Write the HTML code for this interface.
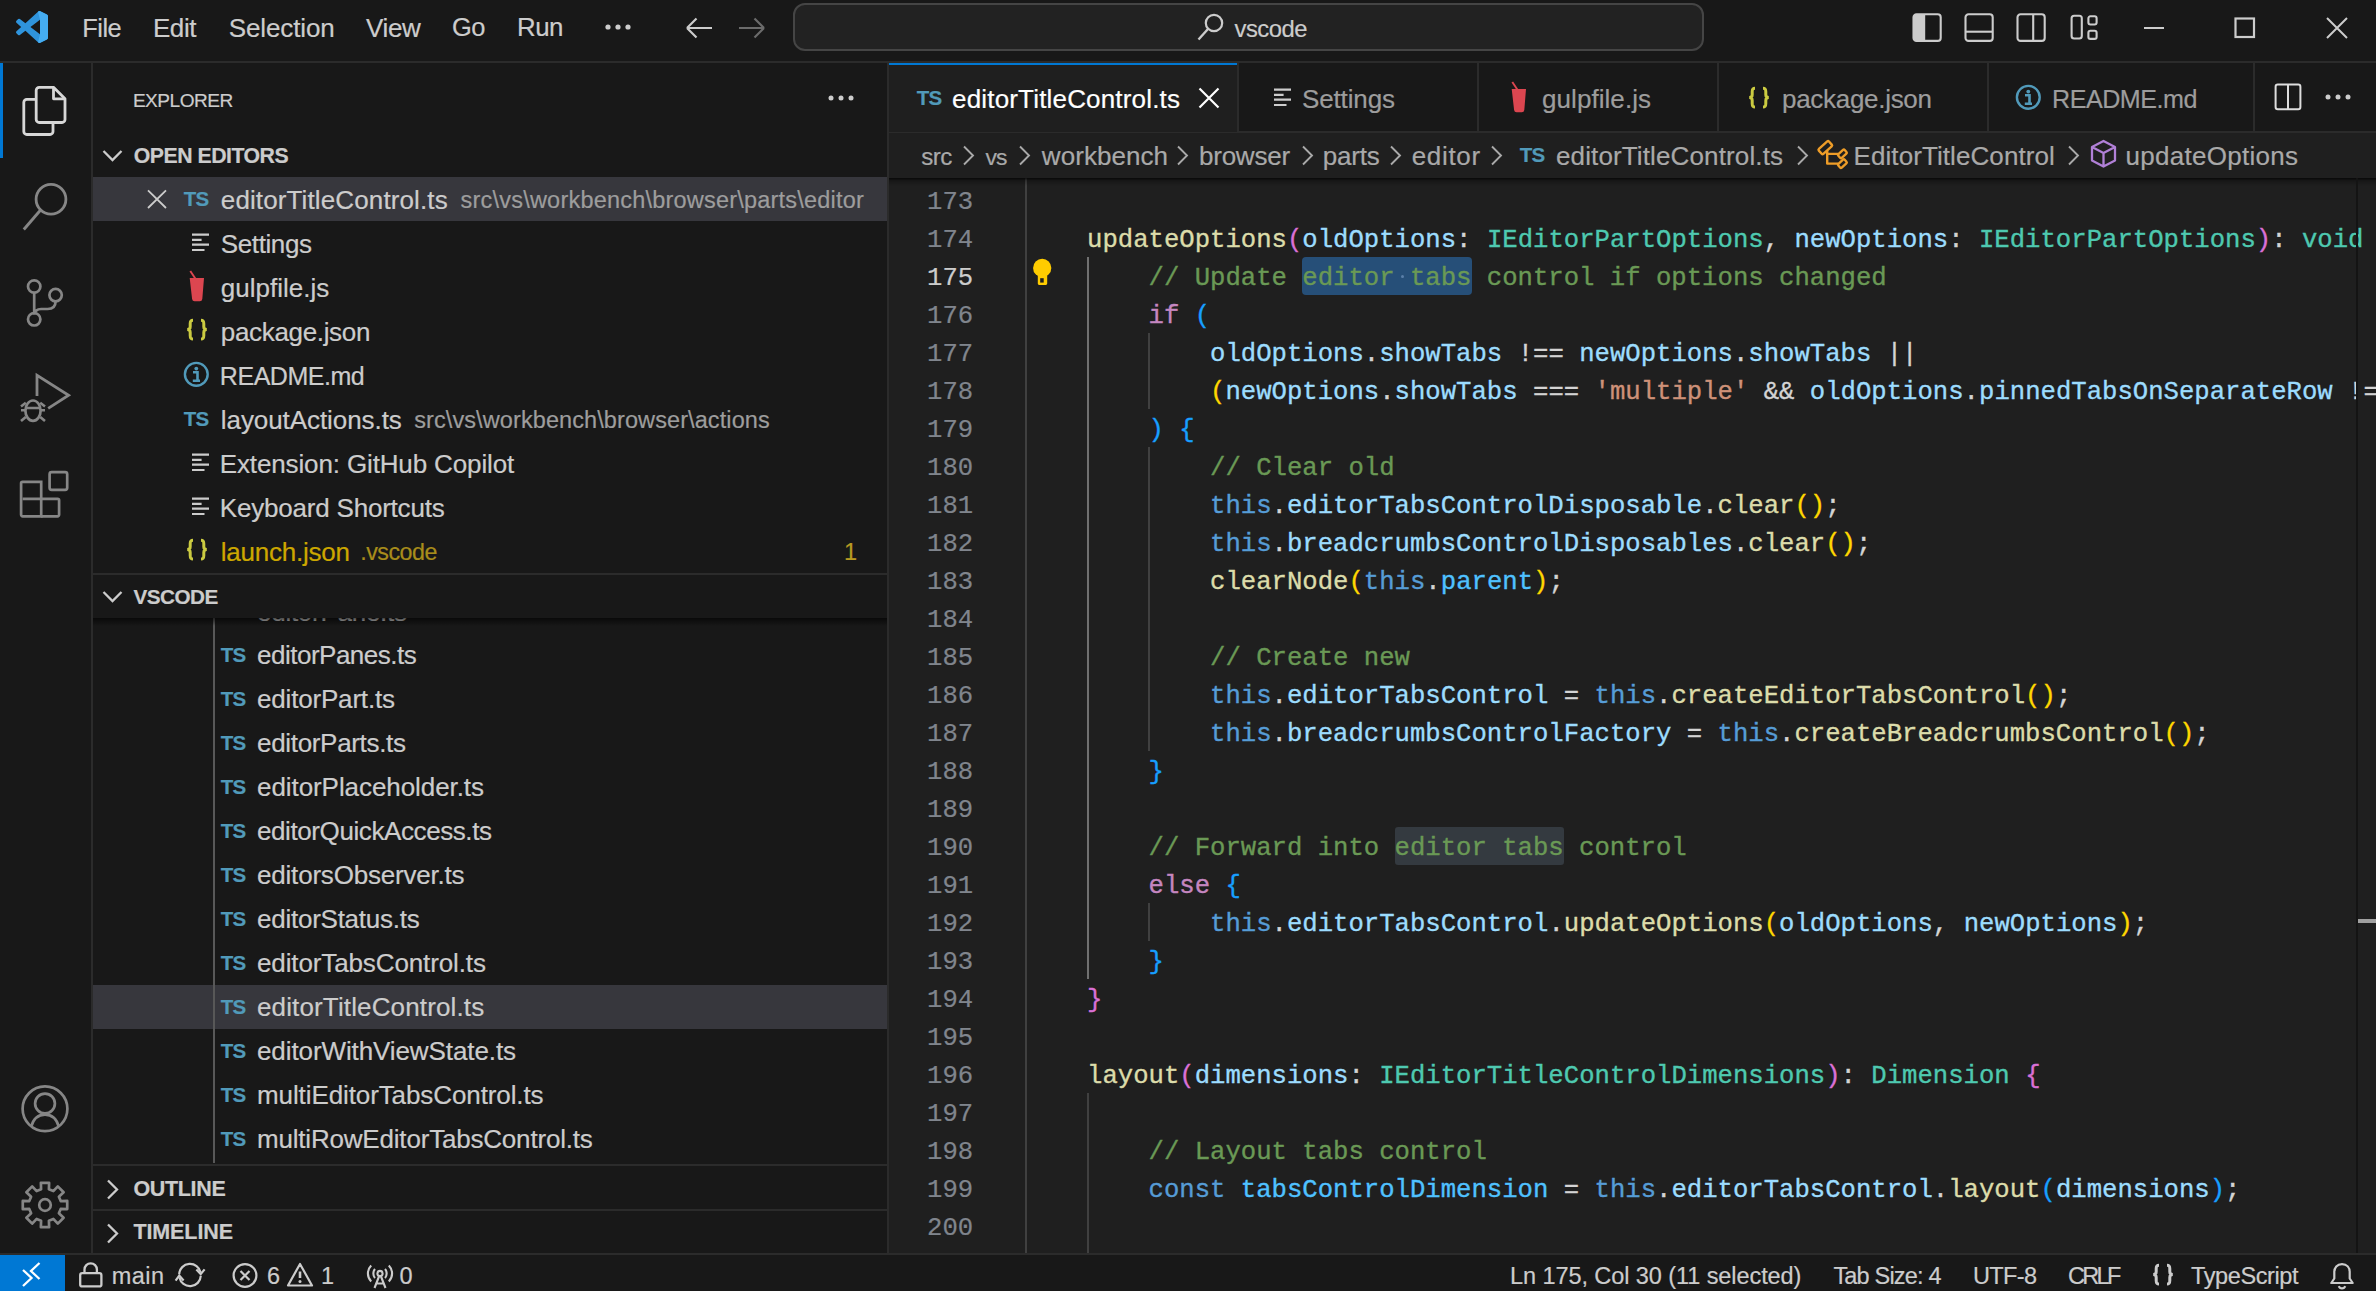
<!DOCTYPE html>
<html><head><meta charset="utf-8"><style>
html,body{margin:0;padding:0;width:2376px;height:1291px;overflow:hidden;background:#181818;}
.t{position:absolute;white-space:pre;-webkit-text-stroke:0.2px currentColor;}
.r{position:absolute;}
.s{position:absolute;overflow:visible;}
</style></head><body>
<div class="r" style="left:0px;top:0px;width:2376px;height:62px;background:#181818;"></div><div class="r" style="left:0px;top:61px;width:2376px;height:2px;background:#2b2b2b;"></div><div class="r" style="left:0px;top:63px;width:91px;height:1191px;background:#181818;"></div><div class="r" style="left:91px;top:63px;width:2px;height:1191px;background:#2b2b2b;"></div><div class="r" style="left:93px;top:63px;width:795px;height:1191px;background:#181818;"></div><div class="r" style="left:887px;top:63px;width:2px;height:1191px;background:#2b2b2b;"></div><div class="r" style="left:889px;top:63px;width:1487px;height:1191px;background:#1f1f1f;"></div><div class="r" style="left:0px;top:1253px;width:2376px;height:2px;background:#2b2b2b;"></div><div class="r" style="left:0px;top:1255px;width:2376px;height:36px;background:#181818;"></div><svg class="s" style="left:16px;top:11px;" width="32" height="32" viewBox="0 0 100 100"><path fill="#2f94dc" d="M96.46 10.8L75.86.87a6.23 6.23 0 0 0-7.1 1.21L29.35 38.04 12.19 25.01a4.16 4.16 0 0 0-5.32.24L1.36 30.26a4.17 4.17 0 0 0 0 6.16L16.24 50 1.36 63.58a4.170 4.17 0 0 0 0 6.16l5.51 5.01a4.16 4.16 0 0 0 5.32.24l17.16-13.03L68.760 97.92a6.22 6.22 0 0 0 7.1 1.21l20.6-9.92a6.25 6.25 0 0 0 3.54-5.630V16.43a6.25 6.25 0 0 0-3.54-5.63zM75.02 72.7L45.11 50l29.91-22.7v45.4z"/><path fill="#45adf2" d="M68.76 2.08a6.23 6.23 0 0 1 7.1-1.21l20.6 9.93A6.25 6.25 0 0 1 100 16.43v67.14a6.25 6.25 0 0 1-3.54 5.63l-20.6 9.92a6.22 6.22 0 0 1-7.1-1.21l6.26-25.21V27.3z"/></svg><div class="t" style="left:82.25px;top:15.51px;font-size:25.38px;line-height:25.38px;color:#cccccc;font-weight:400;letter-spacing:-0.500px;font-family:'Liberation Sans', sans-serif;">File</div><div class="t" style="left:152.90px;top:14.99px;font-size:26px;line-height:26px;color:#cccccc;font-weight:400;letter-spacing:-0.393px;font-family:'Liberation Sans', sans-serif;">Edit</div><div class="t" style="left:228.80px;top:14.99px;font-size:26px;line-height:26px;color:#cccccc;font-weight:400;letter-spacing:-0.125px;font-family:'Liberation Sans', sans-serif;">Selection</div><div class="t" style="left:366.00px;top:14.99px;font-size:26px;line-height:26px;color:#cccccc;font-weight:400;letter-spacing:-0.369px;font-family:'Liberation Sans', sans-serif;">View</div><div class="t" style="left:452.02px;top:15.47px;font-size:25.43px;line-height:25.43px;color:#cccccc;font-weight:400;letter-spacing:-0.500px;font-family:'Liberation Sans', sans-serif;">Go</div><div class="t" style="left:517.01px;top:15.11px;font-size:25.86px;line-height:25.86px;color:#cccccc;font-weight:400;letter-spacing:-0.500px;font-family:'Liberation Sans', sans-serif;">Run</div><svg class="s" style="left:603px;top:20px;" width="30" height="14" viewBox="0 0 30 14"><circle cx="5" cy="7" r="2.6" fill="#cccccc"/><circle cx="15" cy="7" r="2.6" fill="#cccccc"/><circle cx="25" cy="7" r="2.6" fill="#cccccc"/></svg><svg class="s" style="left:684px;top:16px;" width="30" height="24" viewBox="0 0 30 24"><path d="M3 12H28M3 12L12.5 2.5M3 12L12.5 21.5" stroke="#cccccc" stroke-width="2.2" fill="none"/></svg><svg class="s" style="left:737px;top:16px;" width="30" height="24" viewBox="0 0 30 24"><path d="M27 12H2M27 12L17.5 2.5M27 12L17.5 21.5" stroke="#6b6b6b" stroke-width="2.2" fill="none"/></svg><div class="r" style="left:793px;top:3px;width:907px;height:44px;border:2px solid #454545;border-radius:12px;background:#222222;"></div><svg class="s" style="left:1196px;top:12px;" width="30" height="30" viewBox="0 0 30 30"><circle cx="18" cy="11" r="8.2" stroke="#cccccc" stroke-width="2.2" fill="none"/><path d="M12.2 16.8L2.5 27.5" stroke="#cccccc" stroke-width="2.4"/></svg><div class="t" style="left:1234.50px;top:17.35px;font-size:23.8px;line-height:23.8px;color:#cccccc;font-weight:400;letter-spacing:-0.500px;font-family:'Liberation Sans', sans-serif;">vscode</div><svg class="s" style="left:1911px;top:12px;" width="32" height="30" viewBox="0 0 32 30"><rect x="2.5" y="2.3" width="27.2" height="26.6" rx="3" stroke="#cccccc" stroke-width="2.1" fill="none"/><path d="M2.5 5.3a3 3 0 0 1 3-3H14.2V28.9H5.5a3 3 0 0 1-3-3z" fill="#cccccc"/></svg><svg class="s" style="left:1963px;top:12px;" width="32" height="30" viewBox="0 0 32 30"><rect x="2.5" y="2.3" width="27.2" height="26.6" rx="3" stroke="#cccccc" stroke-width="2.1" fill="none"/><path d="M2.5 19.7H29.7" stroke="#cccccc" stroke-width="2.1"/></svg><svg class="s" style="left:2015px;top:12px;" width="32" height="30" viewBox="0 0 32 30"><rect x="2.5" y="2.3" width="27.2" height="26.6" rx="3" stroke="#cccccc" stroke-width="2.1" fill="none"/><path d="M18.2 2.3V28.9" stroke="#cccccc" stroke-width="2.1"/></svg><svg class="s" style="left:2069px;top:13px;" width="30" height="28" viewBox="0 0 30 28"><rect x="2.6" y="2.7" width="10.2" height="22.8" rx="2.5" stroke="#cccccc" stroke-width="2.1" fill="none"/><rect x="19.4" y="3.3" width="8.2" height="8.2" rx="2" stroke="#cccccc" stroke-width="2.1" fill="none"/><rect x="19.4" y="17.7" width="8.2" height="8.2" rx="2" stroke="#cccccc" stroke-width="2.1" fill="none"/></svg><svg class="s" style="left:2144px;top:26px;" width="21" height="4" viewBox="0 0 21 4"><path d="M0 2H20" stroke="#cccccc" stroke-width="2"/></svg><svg class="s" style="left:2234px;top:17px;" width="22" height="22" viewBox="0 0 22 22"><rect x="1.5" y="1.5" width="18.5" height="18.5" stroke="#cccccc" stroke-width="2.2" fill="none"/></svg><svg class="s" style="left:2326px;top:17px;" width="22" height="22" viewBox="0 0 22 22"><path d="M1 1L21 21M21 1L1 21" stroke="#cccccc" stroke-width="2"/></svg><div class="r" style="left:0px;top:63px;width:3px;height:95px;background:#0078d4;"></div><svg class="s" style="left:20px;top:84px;" width="50" height="54" viewBox="0 0 50 54"><path d="M17 15.3H6.8a3 3 0 0 0-3 3V47.5a3 3 0 0 0 3 3H30a3 3 0 0 0 3-3V39" stroke="#d7d7d7" stroke-width="2.8" fill="none" stroke-linejoin="round"/><path d="M19.2 3.3H33.5L45 14.8V35.5a3 3 0 0 1-3 3H19.2a3 3 0 0 1-3-3V6.3a3 3 0 0 1 3-3z" stroke="#d7d7d7" stroke-width="2.8" fill="none" stroke-linejoin="round"/><path d="M33.5 3.3V14.8H45" stroke="#d7d7d7" stroke-width="2.8" fill="none" stroke-linejoin="round"/></svg><svg class="s" style="left:20px;top:180px;" width="52" height="54" viewBox="0 0 52 54"><circle cx="31" cy="19.2" r="14.9" stroke="#868686" stroke-width="2.8" fill="none"/><path d="M20.8 29.8L3.8 49.5" stroke="#868686" stroke-width="2.9" stroke-linecap="butt"/></svg><svg class="s" style="left:20px;top:274px;" width="52" height="54" viewBox="0 0 52 54"><circle cx="14.2" cy="12.5" r="6.2" stroke="#868686" stroke-width="2.7" fill="none"/><circle cx="14.2" cy="45.3" r="6.2" stroke="#868686" stroke-width="2.7" fill="none"/><circle cx="35.6" cy="21.1" r="6.2" stroke="#868686" stroke-width="2.7" fill="none"/><path d="M14.2 18.7V39.1M35.6 27.3c0 5-3 7.7-8 7.7h-6.5c-4 0-6.9 2.5-6.9 5.5" stroke="#868686" stroke-width="2.7" fill="none"/></svg><svg class="s" style="left:18px;top:370px;" width="54" height="56" viewBox="0 0 54 56"><path d="M19 26V5.2L50.6 25.3L30.2 38.4" stroke="#868686" stroke-width="2.8" fill="none" stroke-linejoin="miter"/><ellipse cx="15" cy="40.7" rx="7.6" ry="10.2" stroke="#868686" stroke-width="2.7" fill="none"/><path d="M7.4 38H22.6M3 36.5L7.8 32.8M27 36.5L22.2 32.8M3 40.2H7.4M22.6 40.2H27M3 51L7.8 47M27 51L22.2 47" stroke="#868686" stroke-width="2.6" fill="none"/></svg><svg class="s" style="left:18px;top:468px;" width="54" height="54" viewBox="0 0 54 54"><path d="M4.6 13.8H23.2V48.3H4.6a1.5 1.5 0 0 1-1.5-1.5V15.3a1.5 1.5 0 0 1 1.5-1.5z" stroke="#868686" stroke-width="2.7" fill="none"/><path d="M4.6 30.8H39.6a1.5 1.5 0 0 1 1.5 1.5V46.8a1.5 1.5 0 0 1-1.5 1.5H23.2" stroke="#868686" stroke-width="2.7" fill="none"/><rect x="31.6" y="4.2" width="17.6" height="17.6" rx="2" stroke="#868686" stroke-width="2.7" fill="none"/></svg><svg class="s" style="left:18px;top:1082px;" width="54" height="54" viewBox="0 0 54 54"><circle cx="27" cy="26.8" r="22.4" stroke="#868686" stroke-width="2.7" fill="none"/><circle cx="27" cy="21.5" r="9.9" stroke="#868686" stroke-width="2.7" fill="none"/><path d="M13.3 44.5C15.5 36.5 20.5 32.6 27 32.6S38.5 36.5 40.7 44.5" stroke="#868686" stroke-width="2.7" fill="none"/></svg><svg class="s" style="left:18px;top:1178px;" width="54" height="54" viewBox="0 0 54 54"><path d="M23.08 11.28 L22.88 4.78 L31.12 4.78 L30.92 11.28 L35.34 13.11 L39.80 8.37 L45.63 14.20 L40.89 18.66 L42.72 23.08 L49.22 22.88 L49.22 31.12 L42.72 30.92 L40.89 35.34 L45.63 39.80 L39.80 45.63 L35.34 40.89 L30.92 42.72 L31.12 49.22 L22.88 49.22 L23.08 42.72 L18.66 40.89 L14.20 45.63 L8.37 39.80 L13.11 35.34 L11.28 30.92 L4.78 31.12 L4.78 22.88 L11.28 23.08 L13.11 18.66 L8.37 14.20 L14.20 8.37 L18.66 13.11Z" stroke="#868686" stroke-width="2.7" fill="none" stroke-linejoin="round"/><circle cx="27" cy="27" r="5.8" stroke="#868686" stroke-width="2.7" fill="none"/></svg><div class="t" style="left:132.91px;top:91.36px;font-size:19.07px;line-height:19.07px;color:#cccccc;font-weight:400;letter-spacing:-0.500px;font-family:'Liberation Sans', sans-serif;">EXPLORER</div><svg class="s" style="left:826px;top:92px;" width="30" height="12" viewBox="0 0 30 12"><circle cx="5" cy="6" r="2.5" fill="#cccccc"/><circle cx="15" cy="6" r="2.5" fill="#cccccc"/><circle cx="25" cy="6" r="2.5" fill="#cccccc"/></svg><svg class="s" style="left:102px;top:149px;" width="22" height="14" viewBox="0 0 22 14"><path d="M1.5 2L10.5 11L19.5 2" stroke="#cccccc" stroke-width="2.3" fill="none"/></svg><div class="t" style="left:133.80px;top:145.50px;font-size:21.27px;line-height:21.27px;color:#cccccc;font-weight:700;letter-spacing:-0.500px;font-family:'Liberation Sans', sans-serif;">OPEN EDITORS</div><div class="r" style="left:93px;top:177px;width:794px;height:44px;background:#37373d;"></div><div class="t" style="left:183.70px;top:188.65px;font-size:20.5px;line-height:20.5px;color:#519aba;font-weight:700;letter-spacing:-0.600px;font-family:'Liberation Sans', sans-serif;">TS</div><div class="t" style="left:220.80px;top:186.99px;font-size:26px;line-height:26px;color:#cccccc;font-weight:400;letter-spacing:0.122px;font-family:'Liberation Sans', sans-serif;">editorTitleControl.ts</div><div class="t" style="left:460.60px;top:189.11px;font-size:23.5px;line-height:23.5px;color:#9d9d9d;font-weight:400;letter-spacing:0.208px;font-family:'Liberation Sans', sans-serif;">src\vs\workbench\browser\parts\editor</div><svg class="s" style="left:192px;top:233px;" width="18" height="18" viewBox="0 0 18 18"><path d="M0 1.6H17M0 6.9H9.6M0 11.7H17M0 17H12.5" stroke="#cccccc" stroke-width="2.2"/></svg><div class="t" style="left:220.80px;top:230.99px;font-size:26px;line-height:26px;color:#cccccc;font-weight:400;letter-spacing:-0.392px;font-family:'Liberation Sans', sans-serif;">Settings</div><svg class="s" style="left:185.6px;top:264px;" width="22" height="40" viewBox="0 0 22 40"><path d="M3.7 14H18L16.3 35a2.5 2.5 0 0 1-2.5 2.2H8.6a2.5 2.5 0 0 1-2.5-2.2Z" fill="#dc4650"/><path d="M4.3 7L9.3 14.5" stroke="#dc4650" stroke-width="1.9"/></svg><div class="t" style="left:220.80px;top:274.99px;font-size:26px;line-height:26px;color:#cccccc;font-weight:400;letter-spacing:0.001px;font-family:'Liberation Sans', sans-serif;">gulpfile.js</div><svg class="s" style="left:186px;top:319px;" width="22" height="22" viewBox="0 0 22 22"><path d="M7 1.2C4.6 1.2 4.2 2.2 4.2 4.8V7.8C4.2 9.6 3.4 10.6 1.2 10.6C3.4 10.6 4.2 11.6 4.2 13.4V16.4C4.2 19 4.6 20 7 20M15 1.2C17.4 1.2 17.8 2.2 17.8 4.8V7.8C17.8 9.6 18.6 10.6 20.8 10.6C18.6 10.6 17.8 11.6 17.8 13.4V16.4C17.8 19 17.4 20 15 20" stroke="#cbcb41" stroke-width="3.0" fill="none"/></svg><div class="t" style="left:220.80px;top:318.99px;font-size:26px;line-height:26px;color:#cccccc;font-weight:400;letter-spacing:-0.333px;font-family:'Liberation Sans', sans-serif;">package.json</div><svg class="s" style="left:183px;top:361.3px;" width="27" height="27" viewBox="0 0 27 27"><circle cx="13.3" cy="13.3" r="11.4" stroke="#519aba" stroke-width="2.4" fill="none"/><circle cx="13.3" cy="7.6" r="1.9" fill="#519aba"/><path d="M10 11.2H14.5V19.5M9.8 19.8H17" stroke="#519aba" stroke-width="2.6" fill="none"/></svg><div class="t" style="left:219.87px;top:363.79px;font-size:25.05px;line-height:25.05px;color:#cccccc;font-weight:400;letter-spacing:-0.500px;font-family:'Liberation Sans', sans-serif;">README.md</div><div class="t" style="left:183.70px;top:408.65px;font-size:20.5px;line-height:20.5px;color:#519aba;font-weight:700;letter-spacing:-0.600px;font-family:'Liberation Sans', sans-serif;">TS</div><div class="t" style="left:220.80px;top:406.99px;font-size:26px;line-height:26px;color:#cccccc;font-weight:400;letter-spacing:-0.073px;font-family:'Liberation Sans', sans-serif;">layoutActions.ts</div><div class="t" style="left:414.20px;top:409.11px;font-size:23.5px;line-height:23.5px;color:#9d9d9d;font-weight:400;letter-spacing:0.094px;font-family:'Liberation Sans', sans-serif;">src\vs\workbench\browser\actions</div><svg class="s" style="left:192px;top:453px;" width="18" height="18" viewBox="0 0 18 18"><path d="M0 1.6H17M0 6.9H9.6M0 11.7H17M0 17H12.5" stroke="#cccccc" stroke-width="2.2"/></svg><div class="t" style="left:219.80px;top:450.99px;font-size:26px;line-height:26px;color:#cccccc;font-weight:400;letter-spacing:-0.137px;font-family:'Liberation Sans', sans-serif;">Extension: GitHub Copilot</div><svg class="s" style="left:192px;top:497px;" width="18" height="18" viewBox="0 0 18 18"><path d="M0 1.6H17M0 6.9H9.6M0 11.7H17M0 17H12.5" stroke="#cccccc" stroke-width="2.2"/></svg><div class="t" style="left:219.80px;top:494.99px;font-size:26px;line-height:26px;color:#cccccc;font-weight:400;letter-spacing:-0.203px;font-family:'Liberation Sans', sans-serif;">Keyboard Shortcuts</div><svg class="s" style="left:186px;top:539px;" width="22" height="22" viewBox="0 0 22 22"><path d="M7 1.2C4.6 1.2 4.2 2.2 4.2 4.8V7.8C4.2 9.6 3.4 10.6 1.2 10.6C3.4 10.6 4.2 11.6 4.2 13.4V16.4C4.2 19 4.6 20 7 20M15 1.2C17.4 1.2 17.8 2.2 17.8 4.8V7.8C17.8 9.6 18.6 10.6 20.8 10.6C18.6 10.6 17.8 11.6 17.8 13.4V16.4C17.8 19 17.4 20 15 20" stroke="#cbcb41" stroke-width="3.0" fill="none"/></svg><div class="t" style="left:220.80px;top:538.99px;font-size:26px;line-height:26px;color:#cca700;font-weight:400;letter-spacing:-0.238px;font-family:'Liberation Sans', sans-serif;">launch.json</div><div class="t" style="left:360.22px;top:541.31px;font-size:23.26px;line-height:23.26px;color:#a88d1b;font-weight:400;letter-spacing:-0.500px;font-family:'Liberation Sans', sans-serif;">.vscode</div><svg class="s" style="left:147px;top:189px;" width="20" height="20" viewBox="0 0 20 20"><path d="M1 1.3L19 19M19 1.3L1 19" stroke="#cccccc" stroke-width="1.8"/></svg><div class="t" style="left:844.00px;top:541.11px;font-size:23.5px;line-height:23.5px;color:#b89a22;font-weight:400;letter-spacing:0.000px;font-family:'Liberation Sans', sans-serif;">1</div><div class="r" style="left:93px;top:573px;width:794px;height:2px;background:#2b2b2b;"></div><svg class="s" style="left:102px;top:590px;" width="22" height="14" viewBox="0 0 22 14"><path d="M1.5 2L10.5 11L19.5 2" stroke="#cccccc" stroke-width="2.3" fill="none"/></svg><div class="t" style="left:133.50px;top:587.10px;font-size:20.68px;line-height:20.68px;color:#cccccc;font-weight:700;letter-spacing:-0.500px;font-family:'Liberation Sans', sans-serif;">VSCODE</div><div class="r" style="left:93px;top:618px;width:794px;height:547px;overflow:hidden"><div class="r" style="left:0px;top:367px;width:794px;height:44px;background:#37373d;"></div><div class="t" style="left:127.70px;top:-17.35px;font-size:20.5px;line-height:20.5px;color:#519aba;font-weight:700;letter-spacing:-0.600px;font-family:'Liberation Sans', sans-serif;">TS</div><div class="t" style="left:164.00px;top:-19.51px;font-size:26px;line-height:26px;color:#cccccc;font-weight:400;letter-spacing:-0.267px;font-family:'Liberation Sans', sans-serif;">editorPane.ts</div><div class="t" style="left:127.70px;top:26.65px;font-size:20.5px;line-height:20.5px;color:#519aba;font-weight:700;letter-spacing:-0.600px;font-family:'Liberation Sans', sans-serif;">TS</div><div class="t" style="left:164.00px;top:24.49px;font-size:26.0px;line-height:26.0px;color:#cccccc;font-weight:400;letter-spacing:-0.500px;font-family:'Liberation Sans', sans-serif;">editorPanes.ts</div><div class="t" style="left:127.70px;top:70.65px;font-size:20.5px;line-height:20.5px;color:#519aba;font-weight:700;letter-spacing:-0.600px;font-family:'Liberation Sans', sans-serif;">TS</div><div class="t" style="left:164.00px;top:68.49px;font-size:26px;line-height:26px;color:#cccccc;font-weight:400;letter-spacing:-0.181px;font-family:'Liberation Sans', sans-serif;">editorPart.ts</div><div class="t" style="left:127.70px;top:114.65px;font-size:20.5px;line-height:20.5px;color:#519aba;font-weight:700;letter-spacing:-0.600px;font-family:'Liberation Sans', sans-serif;">TS</div><div class="t" style="left:164.00px;top:112.49px;font-size:26px;line-height:26px;color:#cccccc;font-weight:400;letter-spacing:-0.321px;font-family:'Liberation Sans', sans-serif;">editorParts.ts</div><div class="t" style="left:127.70px;top:158.65px;font-size:20.5px;line-height:20.5px;color:#519aba;font-weight:700;letter-spacing:-0.600px;font-family:'Liberation Sans', sans-serif;">TS</div><div class="t" style="left:164.00px;top:156.49px;font-size:26px;line-height:26px;color:#cccccc;font-weight:400;letter-spacing:-0.072px;font-family:'Liberation Sans', sans-serif;">editorPlaceholder.ts</div><div class="t" style="left:127.70px;top:202.65px;font-size:20.5px;line-height:20.5px;color:#519aba;font-weight:700;letter-spacing:-0.600px;font-family:'Liberation Sans', sans-serif;">TS</div><div class="t" style="left:164.00px;top:200.49px;font-size:26px;line-height:26px;color:#cccccc;font-weight:400;letter-spacing:-0.408px;font-family:'Liberation Sans', sans-serif;">editorQuickAccess.ts</div><div class="t" style="left:127.70px;top:246.65px;font-size:20.5px;line-height:20.5px;color:#519aba;font-weight:700;letter-spacing:-0.600px;font-family:'Liberation Sans', sans-serif;">TS</div><div class="t" style="left:164.00px;top:244.49px;font-size:26px;line-height:26px;color:#cccccc;font-weight:400;letter-spacing:-0.198px;font-family:'Liberation Sans', sans-serif;">editorsObserver.ts</div><div class="t" style="left:127.70px;top:290.65px;font-size:20.5px;line-height:20.5px;color:#519aba;font-weight:700;letter-spacing:-0.600px;font-family:'Liberation Sans', sans-serif;">TS</div><div class="t" style="left:164.00px;top:288.49px;font-size:26px;line-height:26px;color:#cccccc;font-weight:400;letter-spacing:-0.250px;font-family:'Liberation Sans', sans-serif;">editorStatus.ts</div><div class="t" style="left:127.70px;top:334.65px;font-size:20.5px;line-height:20.5px;color:#519aba;font-weight:700;letter-spacing:-0.600px;font-family:'Liberation Sans', sans-serif;">TS</div><div class="t" style="left:164.00px;top:332.49px;font-size:26px;line-height:26px;color:#cccccc;font-weight:400;letter-spacing:-0.122px;font-family:'Liberation Sans', sans-serif;">editorTabsControl.ts</div><div class="t" style="left:127.70px;top:378.65px;font-size:20.5px;line-height:20.5px;color:#519aba;font-weight:700;letter-spacing:-0.600px;font-family:'Liberation Sans', sans-serif;">TS</div><div class="t" style="left:164.00px;top:376.49px;font-size:26px;line-height:26px;color:#cccccc;font-weight:400;letter-spacing:0.137px;font-family:'Liberation Sans', sans-serif;">editorTitleControl.ts</div><div class="t" style="left:127.70px;top:422.65px;font-size:20.5px;line-height:20.5px;color:#519aba;font-weight:700;letter-spacing:-0.600px;font-family:'Liberation Sans', sans-serif;">TS</div><div class="t" style="left:164.00px;top:420.49px;font-size:26px;line-height:26px;color:#cccccc;font-weight:400;letter-spacing:-0.099px;font-family:'Liberation Sans', sans-serif;">editorWithViewState.ts</div><div class="t" style="left:127.70px;top:466.65px;font-size:20.5px;line-height:20.5px;color:#519aba;font-weight:700;letter-spacing:-0.600px;font-family:'Liberation Sans', sans-serif;">TS</div><div class="t" style="left:164.00px;top:464.49px;font-size:26px;line-height:26px;color:#cccccc;font-weight:400;letter-spacing:-0.100px;font-family:'Liberation Sans', sans-serif;">multiEditorTabsControl.ts</div><div class="t" style="left:127.70px;top:510.65px;font-size:20.5px;line-height:20.5px;color:#519aba;font-weight:700;letter-spacing:-0.600px;font-family:'Liberation Sans', sans-serif;">TS</div><div class="t" style="left:164.00px;top:508.49px;font-size:26px;line-height:26px;color:#cccccc;font-weight:400;letter-spacing:-0.193px;font-family:'Liberation Sans', sans-serif;">multiRowEditorTabsControl.ts</div><div class="r" style="left:120px;top:0px;width:2px;height:545px;background:#585858;"></div><div class="r" style="left:0;top:0;width:794px;height:8px;background:linear-gradient(#000000a0,#00000000)"></div></div><div class="r" style="left:93px;top:1164px;width:794px;height:2px;background:#2b2b2b;"></div><svg class="s" style="left:106px;top:1179px;" width="14" height="22" viewBox="0 0 14 22"><path d="M2 1.5L11 10.5L2 19.5" stroke="#cccccc" stroke-width="2.3" fill="none"/></svg><div class="t" style="left:133.40px;top:1178.80px;font-size:21.5px;line-height:21.5px;color:#cccccc;font-weight:700;letter-spacing:-0.336px;font-family:'Liberation Sans', sans-serif;">OUTLINE</div><div class="r" style="left:93px;top:1209px;width:794px;height:2px;background:#2b2b2b;"></div><svg class="s" style="left:106px;top:1223px;" width="14" height="22" viewBox="0 0 14 22"><path d="M2 1.5L11 10.5L2 19.5" stroke="#cccccc" stroke-width="2.3" fill="none"/></svg><div class="t" style="left:133.40px;top:1222.30px;font-size:21.5px;line-height:21.5px;color:#cccccc;font-weight:700;letter-spacing:-0.099px;font-family:'Liberation Sans', sans-serif;">TIMELINE</div><div class="r" style="left:889px;top:63px;width:1487px;height:69px;background:#181818;"></div><div class="r" style="left:889px;top:131px;width:1487px;height:2px;background:#2b2b2b;"></div><div class="r" style="left:889px;top:63px;width:348px;height:69px;background:#1f1f1f;"></div><div class="r" style="left:889px;top:63px;width:348px;height:2px;background:#0078d4;"></div><div class="r" style="left:1237px;top:63px;width:2px;height:68px;background:#2b2b2b;"></div><div class="r" style="left:1477px;top:63px;width:2px;height:68px;background:#2b2b2b;"></div><div class="r" style="left:1717px;top:63px;width:2px;height:68px;background:#2b2b2b;"></div><div class="r" style="left:1987px;top:63px;width:2px;height:68px;background:#2b2b2b;"></div><div class="r" style="left:2253px;top:63px;width:2px;height:68px;background:#2b2b2b;"></div><div class="t" style="left:916.70px;top:87.65px;font-size:20.5px;line-height:20.5px;color:#519aba;font-weight:700;letter-spacing:-0.600px;font-family:'Liberation Sans', sans-serif;">TS</div><div class="t" style="left:952.00px;top:85.99px;font-size:26px;line-height:26px;color:#ffffff;font-weight:400;letter-spacing:0.177px;font-family:'Liberation Sans', sans-serif;">editorTitleControl.ts</div><svg class="s" style="left:1198px;top:87px;" width="22" height="22" viewBox="0 0 22 22"><path d="M1.5 1.5L20.5 20.5M20.5 1.5L1.5 20.5" stroke="#ffffff" stroke-width="2.2"/></svg><svg class="s" style="left:1274px;top:88px;" width="18" height="18" viewBox="0 0 18 18"><path d="M0 1.6H17M0 6.9H9.6M0 11.7H17M0 17H12.5" stroke="#cccccc" stroke-width="2.2"/></svg><div class="t" style="left:1302.00px;top:85.99px;font-size:26px;line-height:26px;color:#9d9d9d;font-weight:400;letter-spacing:-0.135px;font-family:'Liberation Sans', sans-serif;">Settings</div><svg class="s" style="left:1508px;top:75px;" width="22" height="40" viewBox="0 0 22 40"><path d="M3.7 14H18L16.3 35a2.5 2.5 0 0 1-2.5 2.2H8.6a2.5 2.5 0 0 1-2.5-2.2Z" fill="#dc4650"/><path d="M4.3 7L9.3 14.5" stroke="#dc4650" stroke-width="1.9"/></svg><div class="t" style="left:1542.00px;top:85.99px;font-size:26px;line-height:26px;color:#9d9d9d;font-weight:400;letter-spacing:0.061px;font-family:'Liberation Sans', sans-serif;">gulpfile.js</div><svg class="s" style="left:1747.5px;top:86.5px;" width="22" height="22" viewBox="0 0 22 22"><path d="M7 1.2C4.6 1.2 4.2 2.2 4.2 4.8V7.8C4.2 9.6 3.4 10.6 1.2 10.6C3.4 10.6 4.2 11.6 4.2 13.4V16.4C4.2 19 4.6 20 7 20M15 1.2C17.4 1.2 17.8 2.2 17.8 4.8V7.8C17.8 9.6 18.6 10.6 20.8 10.6C18.6 10.6 17.8 11.6 17.8 13.4V16.4C17.8 19 17.4 20 15 20" stroke="#cbcb41" stroke-width="3.0" fill="none"/></svg><div class="t" style="left:1782.00px;top:85.99px;font-size:26px;line-height:26px;color:#9d9d9d;font-weight:400;letter-spacing:-0.296px;font-family:'Liberation Sans', sans-serif;">package.json</div><svg class="s" style="left:2015px;top:84px;" width="27" height="27" viewBox="0 0 27 27"><circle cx="13.3" cy="13.3" r="11.4" stroke="#519aba" stroke-width="2.4" fill="none"/><circle cx="13.3" cy="7.6" r="1.9" fill="#519aba"/><path d="M10 11.2H14.5V19.5M9.8 19.8H17" stroke="#519aba" stroke-width="2.6" fill="none"/></svg><div class="t" style="left:2052.07px;top:86.74px;font-size:25.12px;line-height:25.12px;color:#9d9d9d;font-weight:400;letter-spacing:-0.500px;font-family:'Liberation Sans', sans-serif;">README.md</div><svg class="s" style="left:2274px;top:83px;" width="28" height="28" viewBox="0 0 28 28"><rect x="1.6" y="1.6" width="24.8" height="24.6" rx="2.2" stroke="#dddddd" stroke-width="2" fill="none"/><path d="M14 1.6V26.2" stroke="#dddddd" stroke-width="2"/></svg><svg class="s" style="left:2324px;top:91px;" width="30" height="12" viewBox="0 0 30 12"><circle cx="4" cy="6" r="2.5" fill="#cccccc"/><circle cx="14" cy="6" r="2.5" fill="#cccccc"/><circle cx="24" cy="6" r="2.5" fill="#cccccc"/></svg><div class="t" style="left:921.20px;top:144.75px;font-size:24.16px;line-height:24.16px;color:#a9a9a9;font-weight:400;letter-spacing:-0.500px;font-family:'Liberation Sans', sans-serif;">src</div><div class="t" style="left:985.40px;top:145.83px;font-size:22.88px;line-height:22.88px;color:#a9a9a9;font-weight:400;letter-spacing:-0.780px;font-family:'Liberation Sans', sans-serif;">vs</div><div class="t" style="left:1041.80px;top:143.19px;font-size:26px;line-height:26px;color:#a9a9a9;font-weight:400;letter-spacing:0.066px;font-family:'Liberation Sans', sans-serif;">workbench</div><div class="t" style="left:1199.00px;top:143.19px;font-size:26px;line-height:26px;color:#a9a9a9;font-weight:400;letter-spacing:-0.236px;font-family:'Liberation Sans', sans-serif;">browser</div><div class="t" style="left:1322.70px;top:143.19px;font-size:26px;line-height:26px;color:#a9a9a9;font-weight:400;letter-spacing:-0.200px;font-family:'Liberation Sans', sans-serif;">parts</div><div class="t" style="left:1411.70px;top:143.19px;font-size:26px;line-height:26px;color:#a9a9a9;font-weight:400;letter-spacing:0.664px;font-family:'Liberation Sans', sans-serif;">editor</div><svg class="s" style="left:962px;top:144.5px;" width="14" height="22" viewBox="0 0 14 22"><path d="M2 1.5L11 10.5L2 19.5" stroke="#a9a9a9" stroke-width="1.9" fill="none"/></svg><svg class="s" style="left:1018px;top:144.5px;" width="14" height="22" viewBox="0 0 14 22"><path d="M2 1.5L11 10.5L2 19.5" stroke="#a9a9a9" stroke-width="1.9" fill="none"/></svg><svg class="s" style="left:1176px;top:144.5px;" width="14" height="22" viewBox="0 0 14 22"><path d="M2 1.5L11 10.5L2 19.5" stroke="#a9a9a9" stroke-width="1.9" fill="none"/></svg><svg class="s" style="left:1301px;top:144.5px;" width="14" height="22" viewBox="0 0 14 22"><path d="M2 1.5L11 10.5L2 19.5" stroke="#a9a9a9" stroke-width="1.9" fill="none"/></svg><svg class="s" style="left:1389px;top:144.5px;" width="14" height="22" viewBox="0 0 14 22"><path d="M2 1.5L11 10.5L2 19.5" stroke="#a9a9a9" stroke-width="1.9" fill="none"/></svg><svg class="s" style="left:1490px;top:144.5px;" width="14" height="22" viewBox="0 0 14 22"><path d="M2 1.5L11 10.5L2 19.5" stroke="#a9a9a9" stroke-width="1.9" fill="none"/></svg><svg class="s" style="left:1796px;top:144.5px;" width="14" height="22" viewBox="0 0 14 22"><path d="M2 1.5L11 10.5L2 19.5" stroke="#a9a9a9" stroke-width="1.9" fill="none"/></svg><svg class="s" style="left:2067px;top:144.5px;" width="14" height="22" viewBox="0 0 14 22"><path d="M2 1.5L11 10.5L2 19.5" stroke="#a9a9a9" stroke-width="1.9" fill="none"/></svg><div class="t" style="left:1519.70px;top:144.65px;font-size:20.5px;line-height:20.5px;color:#519aba;font-weight:700;letter-spacing:-0.600px;font-family:'Liberation Sans', sans-serif;">TS</div><div class="t" style="left:1556.00px;top:143.19px;font-size:26px;line-height:26px;color:#a9a9a9;font-weight:400;letter-spacing:0.127px;font-family:'Liberation Sans', sans-serif;">editorTitleControl.ts</div><svg class="s" style="left:1812px;top:136px;" width="40" height="36" viewBox="0 0 40 36"><g stroke="#ee9d28" stroke-width="2.4" fill="none" stroke-linejoin="round"><rect x="-6.8" y="-3.3" width="13.6" height="6.6" rx="1.2" transform="translate(13.3 11.6) rotate(-42)"/><rect x="-4.3" y="-2.5" width="8.6" height="5" rx="1.2" transform="translate(30.4 17.9) rotate(-42)"/><rect x="-4.3" y="-2.5" width="8.6" height="5" rx="1.2" transform="translate(30.4 27.6) rotate(-42)"/><path d="M15.2 14.5V27.6H26M15.2 17.9H26"/></g></svg><div class="t" style="left:1853.50px;top:143.19px;font-size:26px;line-height:26px;color:#a9a9a9;font-weight:400;letter-spacing:0.082px;font-family:'Liberation Sans', sans-serif;">EditorTitleControl</div><svg class="s" style="left:2090px;top:139px;" width="28" height="30" viewBox="0 0 28 30"><path d="M13.5 2L25 8V21.5L13.5 27.5L2 21.5V8Z M2 8L13.5 14L25 8 M13.5 14V27.5" stroke="#b180d7" stroke-width="2.3" fill="none" stroke-linejoin="round"/></svg><div class="t" style="left:2125.50px;top:143.19px;font-size:26px;line-height:26px;color:#a9a9a9;font-weight:400;letter-spacing:0.281px;font-family:'Liberation Sans', sans-serif;">updateOptions</div><div class="r" style="left:889px;top:178px;width:1487px;height:1075px;overflow:hidden"><div class="t" style="left:38.06px;top:-26.35px;font-size:25.633333333333336px;line-height:25.633333333333336px;color:#80858d;font-weight:400;letter-spacing:0.000px;font-family:'Liberation Mono', monospace;">172</div><div class="t" style="left:38.06px;top:11.65px;font-size:25.633333333333336px;line-height:25.633333333333336px;color:#80858d;font-weight:400;letter-spacing:0.000px;font-family:'Liberation Mono', monospace;">173</div><div class="t" style="left:38.06px;top:49.65px;font-size:25.633333333333336px;line-height:25.633333333333336px;color:#80858d;font-weight:400;letter-spacing:0.000px;font-family:'Liberation Mono', monospace;">174</div><div class="t" style="left:38.06px;top:87.65px;font-size:25.633333333333336px;line-height:25.633333333333336px;color:#cccccc;font-weight:400;letter-spacing:0.000px;font-family:'Liberation Mono', monospace;">175</div><div class="t" style="left:38.06px;top:125.65px;font-size:25.633333333333336px;line-height:25.633333333333336px;color:#80858d;font-weight:400;letter-spacing:0.000px;font-family:'Liberation Mono', monospace;">176</div><div class="t" style="left:38.06px;top:163.65px;font-size:25.633333333333336px;line-height:25.633333333333336px;color:#80858d;font-weight:400;letter-spacing:0.000px;font-family:'Liberation Mono', monospace;">177</div><div class="t" style="left:38.06px;top:201.65px;font-size:25.633333333333336px;line-height:25.633333333333336px;color:#80858d;font-weight:400;letter-spacing:0.000px;font-family:'Liberation Mono', monospace;">178</div><div class="t" style="left:38.06px;top:239.65px;font-size:25.633333333333336px;line-height:25.633333333333336px;color:#80858d;font-weight:400;letter-spacing:0.000px;font-family:'Liberation Mono', monospace;">179</div><div class="t" style="left:38.06px;top:277.65px;font-size:25.633333333333336px;line-height:25.633333333333336px;color:#80858d;font-weight:400;letter-spacing:0.000px;font-family:'Liberation Mono', monospace;">180</div><div class="t" style="left:38.06px;top:315.65px;font-size:25.633333333333336px;line-height:25.633333333333336px;color:#80858d;font-weight:400;letter-spacing:0.000px;font-family:'Liberation Mono', monospace;">181</div><div class="t" style="left:38.06px;top:353.65px;font-size:25.633333333333336px;line-height:25.633333333333336px;color:#80858d;font-weight:400;letter-spacing:0.000px;font-family:'Liberation Mono', monospace;">182</div><div class="t" style="left:38.06px;top:391.65px;font-size:25.633333333333336px;line-height:25.633333333333336px;color:#80858d;font-weight:400;letter-spacing:0.000px;font-family:'Liberation Mono', monospace;">183</div><div class="t" style="left:38.06px;top:429.65px;font-size:25.633333333333336px;line-height:25.633333333333336px;color:#80858d;font-weight:400;letter-spacing:0.000px;font-family:'Liberation Mono', monospace;">184</div><div class="t" style="left:38.06px;top:467.65px;font-size:25.633333333333336px;line-height:25.633333333333336px;color:#80858d;font-weight:400;letter-spacing:0.000px;font-family:'Liberation Mono', monospace;">185</div><div class="t" style="left:38.06px;top:505.65px;font-size:25.633333333333336px;line-height:25.633333333333336px;color:#80858d;font-weight:400;letter-spacing:0.000px;font-family:'Liberation Mono', monospace;">186</div><div class="t" style="left:38.06px;top:543.65px;font-size:25.633333333333336px;line-height:25.633333333333336px;color:#80858d;font-weight:400;letter-spacing:0.000px;font-family:'Liberation Mono', monospace;">187</div><div class="t" style="left:38.06px;top:581.65px;font-size:25.633333333333336px;line-height:25.633333333333336px;color:#80858d;font-weight:400;letter-spacing:0.000px;font-family:'Liberation Mono', monospace;">188</div><div class="t" style="left:38.06px;top:619.65px;font-size:25.633333333333336px;line-height:25.633333333333336px;color:#80858d;font-weight:400;letter-spacing:0.000px;font-family:'Liberation Mono', monospace;">189</div><div class="t" style="left:38.06px;top:657.65px;font-size:25.633333333333336px;line-height:25.633333333333336px;color:#80858d;font-weight:400;letter-spacing:0.000px;font-family:'Liberation Mono', monospace;">190</div><div class="t" style="left:38.06px;top:695.65px;font-size:25.633333333333336px;line-height:25.633333333333336px;color:#80858d;font-weight:400;letter-spacing:0.000px;font-family:'Liberation Mono', monospace;">191</div><div class="t" style="left:38.06px;top:733.65px;font-size:25.633333333333336px;line-height:25.633333333333336px;color:#80858d;font-weight:400;letter-spacing:0.000px;font-family:'Liberation Mono', monospace;">192</div><div class="t" style="left:38.06px;top:771.65px;font-size:25.633333333333336px;line-height:25.633333333333336px;color:#80858d;font-weight:400;letter-spacing:0.000px;font-family:'Liberation Mono', monospace;">193</div><div class="t" style="left:38.06px;top:809.65px;font-size:25.633333333333336px;line-height:25.633333333333336px;color:#80858d;font-weight:400;letter-spacing:0.000px;font-family:'Liberation Mono', monospace;">194</div><div class="t" style="left:38.06px;top:847.65px;font-size:25.633333333333336px;line-height:25.633333333333336px;color:#80858d;font-weight:400;letter-spacing:0.000px;font-family:'Liberation Mono', monospace;">195</div><div class="t" style="left:38.06px;top:885.65px;font-size:25.633333333333336px;line-height:25.633333333333336px;color:#80858d;font-weight:400;letter-spacing:0.000px;font-family:'Liberation Mono', monospace;">196</div><div class="t" style="left:38.06px;top:923.65px;font-size:25.633333333333336px;line-height:25.633333333333336px;color:#80858d;font-weight:400;letter-spacing:0.000px;font-family:'Liberation Mono', monospace;">197</div><div class="t" style="left:38.06px;top:961.65px;font-size:25.633333333333336px;line-height:25.633333333333336px;color:#80858d;font-weight:400;letter-spacing:0.000px;font-family:'Liberation Mono', monospace;">198</div><div class="t" style="left:38.06px;top:999.65px;font-size:25.633333333333336px;line-height:25.633333333333336px;color:#80858d;font-weight:400;letter-spacing:0.000px;font-family:'Liberation Mono', monospace;">199</div><div class="t" style="left:38.06px;top:1037.65px;font-size:25.633333333333336px;line-height:25.633333333333336px;color:#80858d;font-weight:400;letter-spacing:0.000px;font-family:'Liberation Mono', monospace;">200</div><div class="r" style="left:413.34px;top:79px;width:169.18px;height:38px;background:#264f78;border-radius:4px"></div><div class="r" style="left:505.62px;top:649px;width:169.18px;height:38px;background:#343a40;border-radius:3px"></div><div class="r" style="left:136px;top:0px;width:2px;height:1076px;background:#404040;"></div><div class="r" style="left:198px;top:79px;width:2px;height:722px;background:#707070;"></div><div class="r" style="left:198px;top:915px;width:2px;height:161px;background:#404040;"></div><div class="r" style="left:259px;top:155px;width:2px;height:76px;background:#404040;"></div><div class="r" style="left:259px;top:269px;width:2px;height:304px;background:#404040;"></div><div class="r" style="left:259px;top:725px;width:2px;height:38px;background:#404040;"></div><div class="t" style="left:198.02px;top:49.65px;font-size:25.633px;line-height:25.633px;font-family:'Liberation Mono', monospace;-webkit-text-stroke:0.35px currentColor"><span style="color:#dcdcaa">updateOptions</span><span style="color:#da70d6">(</span><span style="color:#9cdcfe">oldOptions</span><span style="color:#d4d4d4">: </span><span style="color:#4ec9b0">IEditorPartOptions</span><span style="color:#d4d4d4">, </span><span style="color:#9cdcfe">newOptions</span><span style="color:#d4d4d4">: </span><span style="color:#4ec9b0">IEditorPartOptions</span><span style="color:#da70d6">)</span><span style="color:#d4d4d4">: </span><span style="color:#4ec9b0">void</span><span style="color:#d4d4d4"> </span><span style="color:#da70d6">{</span></div><div class="t" style="left:259.54px;top:87.65px;font-size:25.633px;line-height:25.633px;font-family:'Liberation Mono', monospace;-webkit-text-stroke:0.35px currentColor"><span style="color:#6a9955">// Update editor tabs control if options changed</span></div><div class="t" style="left:259.54px;top:125.65px;font-size:25.633px;line-height:25.633px;font-family:'Liberation Mono', monospace;-webkit-text-stroke:0.35px currentColor"><span style="color:#c586c0">if</span><span style="color:#d4d4d4"> </span><span style="color:#179fff">(</span></div><div class="t" style="left:321.06px;top:163.65px;font-size:25.633px;line-height:25.633px;font-family:'Liberation Mono', monospace;-webkit-text-stroke:0.35px currentColor"><span style="color:#9cdcfe">oldOptions</span><span style="color:#d4d4d4">.</span><span style="color:#9cdcfe">showTabs</span><span style="color:#d4d4d4"> !== </span><span style="color:#9cdcfe">newOptions</span><span style="color:#d4d4d4">.</span><span style="color:#9cdcfe">showTabs</span><span style="color:#d4d4d4"> ||</span></div><div class="t" style="left:321.06px;top:201.65px;font-size:25.633px;line-height:25.633px;font-family:'Liberation Mono', monospace;-webkit-text-stroke:0.35px currentColor"><span style="color:#ffd700">(</span><span style="color:#9cdcfe">newOptions</span><span style="color:#d4d4d4">.</span><span style="color:#9cdcfe">showTabs</span><span style="color:#d4d4d4"> === </span><span style="color:#ce9178">&#x27;multiple&#x27;</span><span style="color:#d4d4d4"> &amp;&amp; </span><span style="color:#9cdcfe">oldOptions</span><span style="color:#d4d4d4">.</span><span style="color:#9cdcfe">pinnedTabsOnSeparateRow</span><span style="color:#d4d4d4"> !== </span></div><div class="t" style="left:259.54px;top:239.65px;font-size:25.633px;line-height:25.633px;font-family:'Liberation Mono', monospace;-webkit-text-stroke:0.35px currentColor"><span style="color:#179fff">)</span><span style="color:#d4d4d4"> </span><span style="color:#179fff">{</span></div><div class="t" style="left:321.06px;top:277.65px;font-size:25.633px;line-height:25.633px;font-family:'Liberation Mono', monospace;-webkit-text-stroke:0.35px currentColor"><span style="color:#6a9955">// Clear old</span></div><div class="t" style="left:321.06px;top:315.65px;font-size:25.633px;line-height:25.633px;font-family:'Liberation Mono', monospace;-webkit-text-stroke:0.35px currentColor"><span style="color:#569cd6">this</span><span style="color:#d4d4d4">.</span><span style="color:#9cdcfe">editorTabsControlDisposable</span><span style="color:#d4d4d4">.</span><span style="color:#dcdcaa">clear</span><span style="color:#ffd700">()</span><span style="color:#d4d4d4">;</span></div><div class="t" style="left:321.06px;top:353.65px;font-size:25.633px;line-height:25.633px;font-family:'Liberation Mono', monospace;-webkit-text-stroke:0.35px currentColor"><span style="color:#569cd6">this</span><span style="color:#d4d4d4">.</span><span style="color:#9cdcfe">breadcrumbsControlDisposables</span><span style="color:#d4d4d4">.</span><span style="color:#dcdcaa">clear</span><span style="color:#ffd700">()</span><span style="color:#d4d4d4">;</span></div><div class="t" style="left:321.06px;top:391.65px;font-size:25.633px;line-height:25.633px;font-family:'Liberation Mono', monospace;-webkit-text-stroke:0.35px currentColor"><span style="color:#dcdcaa">clearNode</span><span style="color:#ffd700">(</span><span style="color:#569cd6">this</span><span style="color:#d4d4d4">.</span><span style="color:#4fc1ff">parent</span><span style="color:#ffd700">)</span><span style="color:#d4d4d4">;</span></div><div class="t" style="left:321.06px;top:467.65px;font-size:25.633px;line-height:25.633px;font-family:'Liberation Mono', monospace;-webkit-text-stroke:0.35px currentColor"><span style="color:#6a9955">// Create new</span></div><div class="t" style="left:321.06px;top:505.65px;font-size:25.633px;line-height:25.633px;font-family:'Liberation Mono', monospace;-webkit-text-stroke:0.35px currentColor"><span style="color:#569cd6">this</span><span style="color:#d4d4d4">.</span><span style="color:#9cdcfe">editorTabsControl</span><span style="color:#d4d4d4"> = </span><span style="color:#569cd6">this</span><span style="color:#d4d4d4">.</span><span style="color:#dcdcaa">createEditorTabsControl</span><span style="color:#ffd700">()</span><span style="color:#d4d4d4">;</span></div><div class="t" style="left:321.06px;top:543.65px;font-size:25.633px;line-height:25.633px;font-family:'Liberation Mono', monospace;-webkit-text-stroke:0.35px currentColor"><span style="color:#569cd6">this</span><span style="color:#d4d4d4">.</span><span style="color:#9cdcfe">breadcrumbsControlFactory</span><span style="color:#d4d4d4"> = </span><span style="color:#569cd6">this</span><span style="color:#d4d4d4">.</span><span style="color:#dcdcaa">createBreadcrumbsControl</span><span style="color:#ffd700">()</span><span style="color:#d4d4d4">;</span></div><div class="t" style="left:259.54px;top:581.65px;font-size:25.633px;line-height:25.633px;font-family:'Liberation Mono', monospace;-webkit-text-stroke:0.35px currentColor"><span style="color:#179fff">}</span></div><div class="t" style="left:259.54px;top:657.65px;font-size:25.633px;line-height:25.633px;font-family:'Liberation Mono', monospace;-webkit-text-stroke:0.35px currentColor"><span style="color:#6a9955">// Forward into editor tabs control</span></div><div class="t" style="left:259.54px;top:695.65px;font-size:25.633px;line-height:25.633px;font-family:'Liberation Mono', monospace;-webkit-text-stroke:0.35px currentColor"><span style="color:#c586c0">else</span><span style="color:#d4d4d4"> </span><span style="color:#179fff">{</span></div><div class="t" style="left:321.06px;top:733.65px;font-size:25.633px;line-height:25.633px;font-family:'Liberation Mono', monospace;-webkit-text-stroke:0.35px currentColor"><span style="color:#569cd6">this</span><span style="color:#d4d4d4">.</span><span style="color:#9cdcfe">editorTabsControl</span><span style="color:#d4d4d4">.</span><span style="color:#dcdcaa">updateOptions</span><span style="color:#ffd700">(</span><span style="color:#9cdcfe">oldOptions</span><span style="color:#d4d4d4">, </span><span style="color:#9cdcfe">newOptions</span><span style="color:#ffd700">)</span><span style="color:#d4d4d4">;</span></div><div class="t" style="left:259.54px;top:771.65px;font-size:25.633px;line-height:25.633px;font-family:'Liberation Mono', monospace;-webkit-text-stroke:0.35px currentColor"><span style="color:#179fff">}</span></div><div class="t" style="left:198.02px;top:809.65px;font-size:25.633px;line-height:25.633px;font-family:'Liberation Mono', monospace;-webkit-text-stroke:0.35px currentColor"><span style="color:#da70d6">}</span></div><div class="t" style="left:198.02px;top:885.65px;font-size:25.633px;line-height:25.633px;font-family:'Liberation Mono', monospace;-webkit-text-stroke:0.35px currentColor"><span style="color:#dcdcaa">layout</span><span style="color:#da70d6">(</span><span style="color:#9cdcfe">dimensions</span><span style="color:#d4d4d4">: </span><span style="color:#4ec9b0">IEditorTitleControlDimensions</span><span style="color:#da70d6">)</span><span style="color:#d4d4d4">: </span><span style="color:#4ec9b0">Dimension</span><span style="color:#d4d4d4"> </span><span style="color:#da70d6">{</span></div><div class="t" style="left:259.54px;top:961.65px;font-size:25.633px;line-height:25.633px;font-family:'Liberation Mono', monospace;-webkit-text-stroke:0.35px currentColor"><span style="color:#6a9955">// Layout tabs control</span></div><div class="t" style="left:259.54px;top:999.65px;font-size:25.633px;line-height:25.633px;font-family:'Liberation Mono', monospace;-webkit-text-stroke:0.35px currentColor"><span style="color:#569cd6">const</span><span style="color:#d4d4d4"> </span><span style="color:#4fc1ff">tabsControlDimension</span><span style="color:#d4d4d4"> = </span><span style="color:#569cd6">this</span><span style="color:#d4d4d4">.</span><span style="color:#9cdcfe">editorTabsControl</span><span style="color:#d4d4d4">.</span><span style="color:#dcdcaa">layout</span><span style="color:#179fff">(</span><span style="color:#9cdcfe">dimensions</span><span style="color:#179fff">)</span><span style="color:#d4d4d4">;</span></div><div class="r" style="left:511.81px;top:96.5px;width:3px;height:3px;border-radius:2px;background:#5a7fa8"></div><div class="r" style="left:0;top:0;width:1487px;height:8px;background:linear-gradient(rgba(0,0,0,0.75),rgba(0,0,0,0.25) 35%,rgba(0,0,0,0))"></div></div><svg class="s" style="left:1031px;top:257px;" width="22" height="30" viewBox="0 0 22 30"><circle cx="11.2" cy="10.9" r="9.15" fill="#ffcc00"/><path d="M4.2 16H18.2L16.2 18.5V26.6a1.3 1.3 0 0 1-1.3 1.3H8.1a1.3 1.3 0 0 1-1.3-1.3V18.5Z" fill="#ffcc00"/><rect x="9.2" y="21.2" width="3.5" height="4.4" fill="#1f1f1f"/></svg><div class="r" style="left:2356px;top:178px;width:2px;height:1075px;background:#141414;"></div><div class="r" style="left:2358px;top:919px;width:18px;height:4px;background:#a0a0a0;"></div><div class="r" style="left:0px;top:1255px;width:65px;height:36px;background:#0078d4;"></div><svg class="s" style="left:20px;top:1261px;" width="22" height="27" viewBox="0 0 22 27"><path d="M3 25L11.5 17L3 9M19.5 2L11 10L19.5 18" stroke="#ffffff" stroke-width="2.3" fill="none"/></svg><svg class="s" style="left:78px;top:1262px;" width="26" height="26" viewBox="0 0 26 26"><path d="M6.5 11V7.5a6.2 6.2 0 0 1 12.4 0V11" stroke="#cccccc" stroke-width="2.3" fill="none"/><rect x="2.2" y="11.2" width="21.2" height="13.2" rx="2" stroke="#cccccc" stroke-width="2.3" fill="none"/></svg><div class="t" style="left:111.70px;top:1265.41px;font-size:23.5px;line-height:23.5px;color:#cccccc;font-weight:400;letter-spacing:0.478px;font-family:'Liberation Sans', sans-serif;">main</div><svg class="s" style="left:174px;top:1259.5px;" width="32" height="30" viewBox="0 0 32 30"><path d="M5.2 14.2A10.8 10.8 0 0 1 26.6 12.6M26.8 15.8A10.8 10.8 0 0 1 5.4 17.4" stroke="#cccccc" stroke-width="2.2" fill="none"/><path d="M22.4 9.6L26.7 14.2L30.6 9.4M1.6 20.6L5.3 15.6L9.6 20.4" stroke="#cccccc" stroke-width="2.2" fill="none"/></svg><svg class="s" style="left:231px;top:1262px;" width="28" height="28" viewBox="0 0 28 28"><circle cx="14" cy="13.5" r="11.4" stroke="#cccccc" stroke-width="2.2" fill="none"/><path d="M9.5 9L18.5 18M18.5 9L9.5 18" stroke="#cccccc" stroke-width="2.2"/></svg><div class="t" style="left:267.00px;top:1265.41px;font-size:23.5px;line-height:23.5px;color:#cccccc;font-weight:400;letter-spacing:0.000px;font-family:'Liberation Sans', sans-serif;">6</div><svg class="s" style="left:286px;top:1261px;" width="28" height="28" viewBox="0 0 28 28"><path d="M14 3L26 24.5H2Z" stroke="#cccccc" stroke-width="2.2" fill="none" stroke-linejoin="round"/><path d="M14 10.5V17" stroke="#cccccc" stroke-width="2.6"/><circle cx="14" cy="20.6" r="1.5" fill="#cccccc"/></svg><div class="t" style="left:321.00px;top:1265.41px;font-size:23.5px;line-height:23.5px;color:#cccccc;font-weight:400;letter-spacing:0.000px;font-family:'Liberation Sans', sans-serif;">1</div><svg class="s" style="left:366px;top:1262px;" width="28" height="28" viewBox="0 0 28 28"><path d="M5.2 3.5C0.8 8 0.8 15 5.2 19.5M22.8 3.5C27.2 8 27.2 15 22.8 19.5M9 7C6.8 9.5 6.8 13.5 9 16M19 7C21.2 9.5 21.2 13.5 19 16" stroke="#cccccc" stroke-width="2.1" fill="none"/><circle cx="14" cy="11.5" r="2.6" stroke="#cccccc" stroke-width="2.1" fill="none"/><path d="M13 14.5L8.5 26M15 14.5L19.5 26M10.5 21.5H17.5" stroke="#cccccc" stroke-width="2.1" fill="none"/></svg><div class="t" style="left:399.50px;top:1265.41px;font-size:23.5px;line-height:23.5px;color:#cccccc;font-weight:400;letter-spacing:0.000px;font-family:'Liberation Sans', sans-serif;">0</div><div class="t" style="left:1510.00px;top:1265.41px;font-size:23.5px;line-height:23.5px;color:#cccccc;font-weight:400;letter-spacing:-0.077px;font-family:'Liberation Sans', sans-serif;">Ln 175, Col 30 (11 selected)</div><div class="t" style="left:1833.40px;top:1265.41px;font-size:23.5px;line-height:23.5px;color:#cccccc;font-weight:400;letter-spacing:-0.809px;font-family:'Liberation Sans', sans-serif;">Tab Size: 4</div><div class="t" style="left:1973.00px;top:1265.41px;font-size:23.5px;line-height:23.5px;color:#cccccc;font-weight:400;letter-spacing:-0.627px;font-family:'Liberation Sans', sans-serif;">UTF-8</div><div class="t" style="left:2068.00px;top:1265.41px;font-size:23.5px;line-height:23.5px;color:#cccccc;font-weight:400;letter-spacing:-2.670px;font-family:'Liberation Sans', sans-serif;">CRLF</div><svg class="s" style="left:2152px;top:1264px;" width="22" height="22" viewBox="0 0 22 22"><path d="M7 1.2C4.6 1.2 4.2 2.2 4.2 4.8V7.8C4.2 9.6 3.4 10.6 1.2 10.6C3.4 10.6 4.2 11.6 4.2 13.4V16.4C4.2 19 4.6 20 7 20M15 1.2C17.4 1.2 17.8 2.2 17.8 4.8V7.8C17.8 9.6 18.6 10.6 20.8 10.6C18.6 10.6 17.8 11.6 17.8 13.4V16.4C17.8 19 17.4 20 15 20" stroke="#cccccc" stroke-width="3.0" fill="none"/></svg><div class="t" style="left:2191.00px;top:1265.41px;font-size:23.5px;line-height:23.5px;color:#cccccc;font-weight:400;letter-spacing:-0.388px;font-family:'Liberation Sans', sans-serif;">TypeScript</div><svg class="s" style="left:2329px;top:1261px;" width="26" height="30" viewBox="0 0 26 30"><path d="M13 3.2C8 3.2 5.3 6.8 5.3 11V17.5L2.3 22H23.7L20.7 17.5V11C20.7 6.8 18 3.2 13 3.2Z" stroke="#cccccc" stroke-width="2.2" fill="none" stroke-linejoin="round"/><path d="M9.8 25.2a3.4 3.4 0 0 0 6.4 0" stroke="#cccccc" stroke-width="2.2" fill="none"/></svg>
</body></html>
